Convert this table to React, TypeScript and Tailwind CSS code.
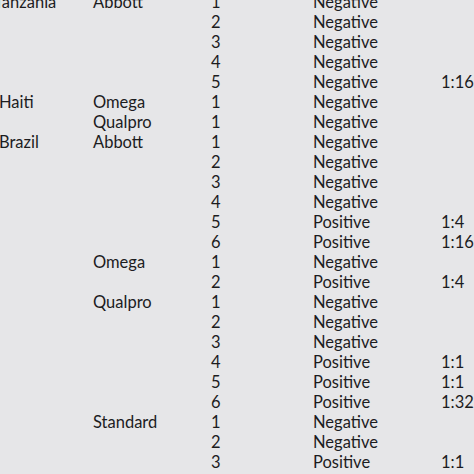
import React from "react";

type Row = [string, string, string, string, string];

const rows: Row[] = [
  ["Tanzania", "Abbott", "1", "Negative", ""],
  ["", "", "2", "Negative", ""],
  ["", "", "3", "Negative", ""],
  ["", "", "4", "Negative", ""],
  ["", "", "5", "Negative", "1:16"],
  ["Haiti", "Omega", "1", "Negative", ""],
  ["", "Qualpro", "1", "Negative", ""],
  ["Brazil", "Abbott", "1", "Negative", ""],
  ["", "", "2", "Negative", ""],
  ["", "", "3", "Negative", ""],
  ["", "", "4", "Negative", ""],
  ["", "", "5", "Positive", "1:4"],
  ["", "", "6", "Positive", "1:16"],
  ["", "Omega", "1", "Negative", ""],
  ["", "", "2", "Positive", "1:4"],
  ["", "Qualpro", "1", "Negative", ""],
  ["", "", "2", "Negative", ""],
  ["", "", "3", "Negative", ""],
  ["", "", "4", "Positive", "1:1"],
  ["", "", "5", "Positive", "1:1"],
  ["", "", "6", "Positive", "1:32"],
  ["", "Standard", "1", "Negative", ""],
  ["", "", "2", "Negative", ""],
  ["", "", "3", "Positive", "1:1"],
];

export default function App() {
  return (
    <div className="w-[474px] h-[474px] overflow-hidden bg-[#e6e6e8] text-[#1c1c1e] font-['Lato',sans-serif] text-[16.5px] leading-[20px]">
      <div className="mt-[-8px] ml-[-1px] grid grid-cols-[94px_118px_102px_128px_60px] auto-rows-[20px] whitespace-nowrap">
        {rows.map((r, i) => (
          <React.Fragment key={i}>
            <div className={i === 0 ? "ml-[-5px]" : ""}>{r[0]}</div>
            <div>{r[1]}</div>
            <div>{r[2]}</div>
            <div>{r[3]}</div>
            <div>{r[4]}</div>
          </React.Fragment>
        ))}
      </div>
    </div>
  );
}
